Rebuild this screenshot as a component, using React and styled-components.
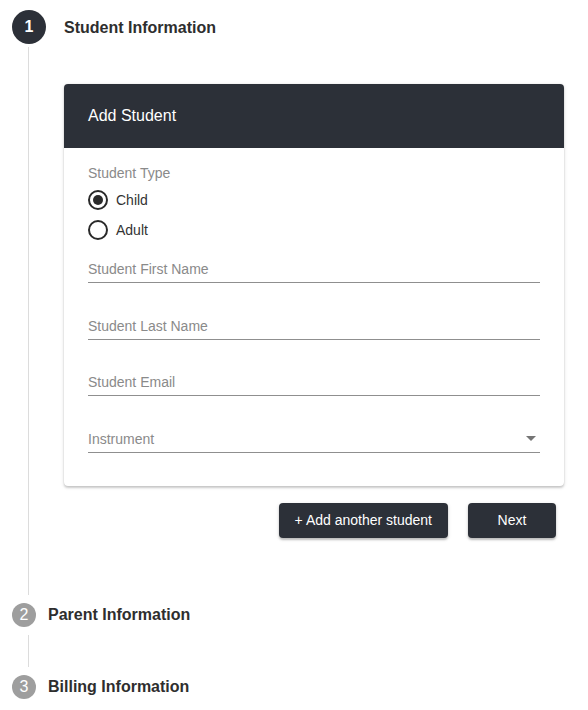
import React from "react";
import styled, { createGlobalStyle } from "styled-components";

const GlobalStyle = createGlobalStyle`
  html, body { margin: 0; padding: 0; background: #ffffff; }
  body { font-family: "Liberation Sans", Arial, sans-serif; color: #333; }
  * { box-sizing: border-box; }
`;

const DARK = "#2c3038";

const Page = styled.div`
  padding: 10px 0 0 12px;
  width: 588px;
`;

const StepHeader = styled.div`
  display: flex;
  align-items: center;
  height: ${(p) => p.$size}px;
`;

const StepCircle = styled.div`
  width: ${(p) => p.$size}px;
  height: ${(p) => p.$size}px;
  border-radius: 50%;
  background: ${(p) => (p.$active ? DARK : "#9e9e9e")};
  color: #fff;
  display: flex;
  align-items: center;
  justify-content: center;
  font-size: 16px;
  font-weight: ${(p) => (p.$active ? 700 : 400)};
  flex-shrink: 0;
`;

const StepTitle = styled.div`
  margin-left: ${(p) => p.$gap}px;
  font-size: 16px;
  font-weight: 700;
  line-height: 20px;
  padding-top: 1px;
  color: #2e2e2e;
`;

const StepContent = styled.div`
  margin: 3px 0 0 16px;
  border-left: 1px solid #dcdcdc;
  padding: 37px 32px 57px 35px;
`;

const Connector = styled.div`
  margin: 8px 0 8px 16px;
  border-left: 1px solid #dcdcdc;
  height: 32px;
`;

const Spacer = styled.div`
  height: 8px;
`;

const Card = styled.div`
  width: 500px;
  border-radius: 4px;
  background: #fff;
  box-shadow: 0 2px 2px rgba(0, 0, 0, 0.14), 0 1px 4px rgba(0, 0, 0, 0.12),
    0 0 1px rgba(0, 0, 0, 0.12);
  overflow: hidden;
`;

const CardHeader = styled.div`
  height: 64px;
  background: ${DARK};
  color: #fff;
  font-size: 16px;
  display: flex;
  align-items: center;
  padding-left: 24px;
`;

const CardBody = styled.div`
  padding: 15px 24px 33px 24px;
  display: flex;
  flex-direction: column;
`;

const GroupLabel = styled.div`
  font-size: 14px;
  line-height: 20px;
  color: #8a8a8a;
  margin-bottom: 2px;
`;

const RadioRow = styled.label`
  display: flex;
  align-items: center;
  height: 30px;
  font-size: 14px;
  color: #333;
  gap: 8px;
`;

const RadioOuter = styled.span`
  width: 20px;
  height: 20px;
  border-radius: 50%;
  border: 2px solid #2a2a2a;
  display: flex;
  align-items: center;
  justify-content: center;
  &::after {
    content: "";
    width: 10px;
    height: 10px;
    border-radius: 50%;
    background: ${(p) => (p.$checked ? "#2a2a2a" : "transparent")};
  }
`;

const Fields = styled.div`
  display: flex;
  flex-direction: column;
  gap: 18.5px;
`;

const Field = styled.div`
  height: 38px;
  display: flex;
  align-items: flex-end;
  justify-content: space-between;
  padding-bottom: 3px;
  border-bottom: 1px solid #8f8f8f;
  font-size: 14px;
  line-height: 20px;
  color: #8a8a8a;
`;

const Arrow = styled.svg`
  margin: 0 4px 8px 0;
`;

const Actions = styled.div`
  display: flex;
  justify-content: flex-end;
  gap: 20px;
  margin-top: 17px;
`;

const Button = styled.button`
  height: 35px;
  min-width: 88px;
  padding: 0 16px;
  border: none;
  border-radius: 4px;
  background: ${DARK};
  color: #fff;
  font-family: "Liberation Sans", Arial, sans-serif;
  font-size: 14px;
  box-shadow: 0 2px 2px rgba(0, 0, 0, 0.2), 0 1px 4px rgba(0, 0, 0, 0.12);
  cursor: pointer;
`;

const Radio = ({ checked, children }) => (
  <RadioRow>
    <RadioOuter $checked={checked} />
    {children}
  </RadioRow>
);

export default function App() {
  return (
    <>
      <GlobalStyle />
      <Page>
        <StepHeader $size={34}>
          <StepCircle $size={34} $active>1</StepCircle>
          <StepTitle $gap={18}>Student Information</StepTitle>
        </StepHeader>
        <StepContent>
          <Card>
            <CardHeader>Add Student</CardHeader>
            <CardBody>
              <GroupLabel>Student Type</GroupLabel>
              <Radio checked>Child</Radio>
              <Radio>Adult</Radio>
              <Fields>
                <Field>Student First Name</Field>
                <Field>Student Last Name</Field>
                <Field>Student Email</Field>
                <Field>
                  Instrument
                  <Arrow width="10" height="5" viewBox="0 0 10 5">
                    <path d="M0 0l5 5 5-5z" fill="#757575" />
                  </Arrow>
                </Field>
              </Fields>
            </CardBody>
          </Card>
          <Actions>
            <Button>+ Add another student</Button>
            <Button>Next</Button>
          </Actions>
        </StepContent>
        <Spacer />
        <StepHeader $size={24}>
          <StepCircle $size={24}>2</StepCircle>
          <StepTitle $gap={12}>Parent Information</StepTitle>
        </StepHeader>
        <Connector />
        <StepHeader $size={24}>
          <StepCircle $size={24}>3</StepCircle>
          <StepTitle $gap={12}>Billing Information</StepTitle>
        </StepHeader>
      </Page>
    </>
  );
}
